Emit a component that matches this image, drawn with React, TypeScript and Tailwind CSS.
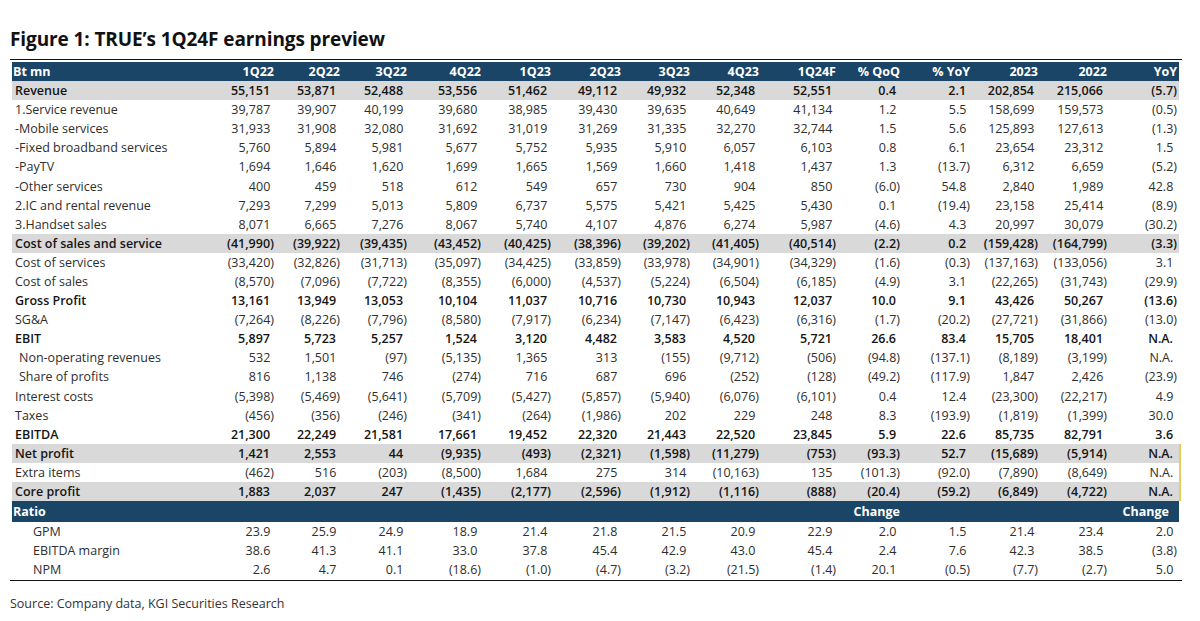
import React from "react";

type Row = {
  label: string;
  vals: string[];
  bold?: boolean;
  gray?: boolean;
  indent?: string;
};

const rows: Row[] = [
  { label: "Revenue", bold: true, gray: true, vals: ["55,151", "53,871", "52,488", "53,556", "51,462", "49,112", "49,932", "52,348", "52,551", "0.4", "2.1", "202,854", "215,066", "(5.7)"] },
  { label: "1.Service revenue", vals: ["39,787", "39,907", "40,199", "39,680", "38,985", "39,430", "39,635", "40,649", "41,134", "1.2", "5.5", "158,699", "159,573", "(0.5)"] },
  { label: "-Mobile services", vals: ["31,933", "31,908", "32,080", "31,692", "31,019", "31,269", "31,335", "32,270", "32,744", "1.5", "5.6", "125,893", "127,613", "(1.3)"] },
  { label: "-Fixed broadband services", vals: ["5,760", "5,894", "5,981", "5,677", "5,752", "5,935", "5,910", "6,057", "6,103", "0.8", "6.1", "23,654", "23,312", "1.5"] },
  { label: "-PayTV", vals: ["1,694", "1,646", "1,620", "1,699", "1,665", "1,569", "1,660", "1,418", "1,437", "1.3", "(13.7)", "6,312", "6,659", "(5.2)"] },
  { label: "-Other services", vals: ["400", "459", "518", "612", "549", "657", "730", "904", "850", "(6.0)", "54.8", "2,840", "1,989", "42.8"] },
  { label: "2.IC and rental revenue", vals: ["7,293", "7,299", "5,013", "5,809", "6,737", "5,575", "5,421", "5,425", "5,430", "0.1", "(19.4)", "23,158", "25,414", "(8.9)"] },
  { label: "3.Handset sales", vals: ["8,071", "6,665", "7,276", "8,067", "5,740", "4,107", "4,876", "6,274", "5,987", "(4.6)", "4.3", "20,997", "30,079", "(30.2)"] },
  { label: "Cost of sales and service", bold: true, gray: true, vals: ["(41,990)", "(39,922)", "(39,435)", "(43,452)", "(40,425)", "(38,396)", "(39,202)", "(41,405)", "(40,514)", "(2.2)", "0.2", "(159,428)", "(164,799)", "(3.3)"] },
  { label: "Cost of services", vals: ["(33,420)", "(32,826)", "(31,713)", "(35,097)", "(34,425)", "(33,859)", "(33,978)", "(34,901)", "(34,329)", "(1.6)", "(0.3)", "(137,163)", "(133,056)", "3.1"] },
  { label: "Cost of sales", vals: ["(8,570)", "(7,096)", "(7,722)", "(8,355)", "(6,000)", "(4,537)", "(5,224)", "(6,504)", "(6,185)", "(4.9)", "3.1", "(22,265)", "(31,743)", "(29.9)"] },
  { label: "Gross Profit", bold: true, vals: ["13,161", "13,949", "13,053", "10,104", "11,037", "10,716", "10,730", "10,943", "12,037", "10.0", "9.1", "43,426", "50,267", "(13.6)"] },
  { label: "SG&A", vals: ["(7,264)", "(8,226)", "(7,796)", "(8,580)", "(7,917)", "(6,234)", "(7,147)", "(6,423)", "(6,316)", "(1.7)", "(20.2)", "(27,721)", "(31,866)", "(13.0)"] },
  { label: "EBIT", bold: true, vals: ["5,897", "5,723", "5,257", "1,524", "3,120", "4,482", "3,583", "4,520", "5,721", "26.6", "83.4", "15,705", "18,401", "N.A."] },
  { label: "Non-operating revenues", indent: "pl-[7px]", vals: ["532", "1,501", "(97)", "(5,135)", "1,365", "313", "(155)", "(9,712)", "(506)", "(94.8)", "(137.1)", "(8,189)", "(3,199)", "N.A."] },
  { label: "Share of profits", indent: "pl-[7px]", vals: ["816", "1,138", "746", "(274)", "716", "687", "696", "(252)", "(128)", "(49.2)", "(117.9)", "1,847", "2,426", "(23.9)"] },
  { label: "Interest costs", vals: ["(5,398)", "(5,469)", "(5,641)", "(5,709)", "(5,427)", "(5,857)", "(5,940)", "(6,076)", "(6,101)", "0.4", "12.4", "(23,300)", "(22,217)", "4.9"] },
  { label: "Taxes", vals: ["(456)", "(356)", "(246)", "(341)", "(264)", "(1,986)", "202", "229", "248", "8.3", "(193.9)", "(1,819)", "(1,399)", "30.0"] },
  { label: "EBITDA", bold: true, vals: ["21,300", "22,249", "21,581", "17,661", "19,452", "22,320", "21,443", "22,520", "23,845", "5.9", "22.6", "85,735", "82,791", "3.6"] },
];

const tail: Row[] = [
  { label: "Net profit", bold: true, gray: true, vals: ["1,421", "2,553", "44", "(9,935)", "(493)", "(2,321)", "(1,598)", "(11,279)", "(753)", "(93.3)", "52.7", "(15,689)", "(5,914)", "N.A."] },
  { label: "Extra items", vals: ["(462)", "516", "(203)", "(8,500)", "1,684", "275", "314", "(10,163)", "135", "(101.3)", "(92.0)", "(7,890)", "(8,649)", "N.A."] },
  { label: "Core profit", bold: true, gray: true, vals: ["1,883", "2,037", "247", "(1,435)", "(2,177)", "(2,596)", "(1,912)", "(1,116)", "(888)", "(20.4)", "(59.2)", "(6,849)", "(4,722)", "N.A."] },
];

const ratios: Row[] = [
  { label: "GPM", vals: ["23.9", "25.9", "24.9", "18.9", "21.4", "21.8", "21.5", "20.9", "22.9", "2.0", "1.5", "21.4", "23.4", "2.0"] },
  { label: "EBITDA margin", vals: ["38.6", "41.3", "41.1", "33.0", "37.8", "45.4", "42.9", "43.0", "45.4", "2.4", "7.6", "42.3", "38.5", "(3.8)"] },
  { label: "NPM", vals: ["2.6", "4.7", "0.1", "(18.6)", "(1.0)", "(4.7)", "(3.2)", "(21.5)", "(1.4)", "20.1", "(0.5)", "(7.7)", "(2.7)", "5.0"] },
];

const headers = ["1Q22", "2Q22", "3Q22", "4Q22", "1Q23", "2Q23", "3Q23", "4Q23", "1Q24F", "% QoQ", "% YoY", "2023", "2022", "YoY"];

const GRID =
  "grid grid-cols-[194px_70px_66px_67px_74px_70px_70px_69px_69px_77px_64px_70px_68px_69px_70px]";

function Num({ v }: { v: string }) {
  const paren = v.startsWith("(");
  return (
    <div className="pr-[2px] text-right whitespace-nowrap">
      {v}
      {!paren && <span className="invisible">)</span>}
    </div>
  );
}

function DataRow({ r }: { r: Row }) {
  return (
    <div
      className={`${GRID} h-[19.1px] items-center ${r.gray ? "bg-[#d9d9d9]" : ""} ${
        r.bold ? "font-semibold text-[#151515]" : "text-[#2e2e2e]"
      }`}
    >
      <div className={`pl-[3px] whitespace-nowrap ${r.indent ?? ""}`}>{r.label}</div>
      {r.vals.map((v, i) => (
        <Num key={i} v={v} />
      ))}
    </div>
  );
}

export default function App() {
  return (
    <div
      className="w-[1200px] h-[621px] bg-white pl-[10px] pt-[26px] overflow-hidden"
      style={{ fontFamily: '"Open Sans", "Noto Sans", sans-serif' }}
    >
      <h1 className="text-[19px] font-bold leading-[26px] text-[#111] tracking-[-0.1px]">
        Figure 1: TRUE’s 1Q24F earnings preview
      </h1>
      <div className="mt-[7px] w-[1172px] border-t border-[#111]" />
      <div className="ml-[2px] mt-[2px] w-[1167px] text-[12.5px] leading-[19px]">
        <div className={`${GRID} h-[19px] items-center bg-[#1b4566] text-white font-bold`}>
          <div className="pl-[1px]">Bt mn</div>
          {headers.map((h) => (
            <div key={h} className="pr-[2px] text-right whitespace-nowrap">
              {h}
            </div>
          ))}
        </div>
        {rows.map((r) => (
          <DataRow key={r.label} r={r} />
        ))}
        <div className="shadow-[2px_0_0_#eccb5c]">
          {tail.map((r) => (
            <DataRow key={r.label} r={r} />
          ))}
        </div>
        <div className={`${GRID} h-[21px] items-center bg-[#1b4566] text-white font-bold`}>
          <div className="pl-[1px]">Ratio</div>
          <div />
          <div />
          <div />
          <div />
          <div />
          <div />
          <div />
          <div />
          <div />
          <div className="pr-[2px] text-right">Change</div>
          <div />
          <div />
          <div />
          <div className="pr-[10px] text-right">Change</div>
        </div>
        {ratios.map((r) => (
          <DataRow key={r.label} r={{ ...r, indent: "pl-[21px]" }} />
        ))}
      </div>
      <div className="mt-[1px] w-[1172px] border-t border-[#111]" />
      <div className="mt-[15px] text-[12.5px] leading-[16px] text-[#333]">
        Source: Company data, KGI Securities Research
      </div>
    </div>
  );
}
